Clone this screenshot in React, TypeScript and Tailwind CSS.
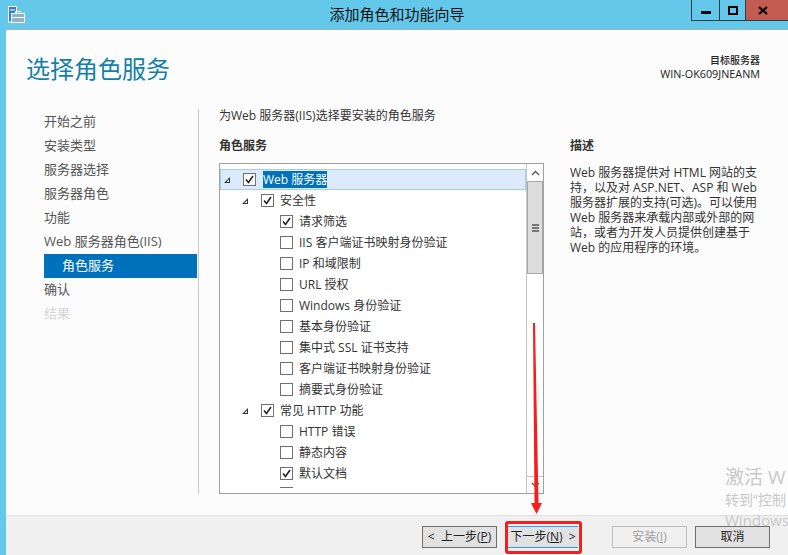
const FONT = "[font-family:'Open_Sans','Noto_Sans_CJK_SC',sans-serif]"

const navItems = [
  { label: '开始之前' },
  { label: '安装类型' },
  { label: '服务器选择' },
  { label: '服务器角色' },
  { label: '功能' },
  { label: 'Web 服务器角色(IIS)' },
  { label: '角色服务', active: true },
  { label: '确认' },
  { label: '结果', disabled: true },
]

type Row = { label: string; level: number; checked?: boolean; expander?: boolean; selected?: boolean }

const rows: Row[] = [
  { label: 'Web 服务器', level: 0, checked: true, expander: true, selected: true },
  { label: '安全性', level: 1, checked: true, expander: true },
  { label: '请求筛选', level: 2, checked: true },
  { label: 'IIS 客户端证书映射身份验证', level: 2 },
  { label: 'IP 和域限制', level: 2 },
  { label: 'URL 授权', level: 2 },
  { label: 'Windows 身份验证', level: 2 },
  { label: '基本身份验证', level: 2 },
  { label: '集中式 SSL 证书支持', level: 2 },
  { label: '客户端证书映射身份验证', level: 2 },
  { label: '摘要式身份验证', level: 2 },
  { label: '常见 HTTP 功能', level: 1, checked: true, expander: true },
  { label: 'HTTP 错误', level: 2 },
  { label: '静态内容', level: 2 },
  { label: '默认文档', level: 2, checked: true },
]

function Checkbox({ checked }: { checked?: boolean }) {
  return (
    <span className="flex size-[13px] shrink-0 items-center justify-center border border-[#707070] bg-white">
      {checked && (
        <svg width="11" height="11" viewBox="0 0 11 11" fill="none">
          <path d="M2 5.5 L4.5 8.5 L9 2" stroke="#222" strokeWidth="1.6" />
        </svg>
      )}
    </span>
  )
}

function TreeRow({ row }: { row: Row }) {
  const indent = row.level === 0 ? 'pl-[2px]' : row.level === 1 ? 'pl-[21px]' : 'pl-[60px]'
  return (
    <div className={`flex h-[21px] items-center ${indent} ${row.selected ? 'border border-[#a9cdf2] bg-[#dcebfc]' : ''}`}>
      {row.expander && (
        <svg className="mr-[12px] shrink-0" width="8" height="8" viewBox="0 0 8 8">
          <path d="M7 1 V7 H1 Z" fill="#333" />
          <path d="M6 3.5 V6 H3.5 Z" fill="#fff" />
        </svg>
      )}
      <Checkbox checked={row.checked} />
      <span className={`text-[12px] leading-[17px] ${row.selected ? 'ml-[7px] bg-[#0072bc] text-white' : 'ml-[6px] text-[#333]'}`}>
        {row.label}
      </span>
    </div>
  )
}

function Scrollbar() {
  return (
    <div className="flex w-[17px] shrink-0 flex-col border-l border-[#c4c4c4] bg-white">
      <div className="flex h-[17px] items-center justify-center">
        <svg width="9" height="6" viewBox="0 0 9 6" fill="none">
          <path d="M1 5 L4.5 1.5 L8 5" stroke="#555" strokeWidth="1.3" />
        </svg>
      </div>
      <div className="flex h-[93px] items-center justify-center border border-[#a8a8a8] bg-[#dcdcdc]">
        <div className="flex flex-col gap-[1px]">
          <div className="h-[2px] w-[7px] bg-[#777]" />
          <div className="h-[2px] w-[7px] bg-[#777]" />
          <div className="h-[2px] w-[7px] bg-[#777]" />
        </div>
      </div>
      <div className="flex-1" />
      <div className="flex h-[17px] items-center justify-center border-t border-[#c4c4c4]">
        <svg width="9" height="6" viewBox="0 0 9 6" fill="none">
          <path d="M1 1 L4.5 4.5 L8 1" stroke="#555" strokeWidth="1.3" />
        </svg>
      </div>
    </div>
  )
}

function FooterButton({ children, tone = 'normal' }: { children: React.ReactNode; tone?: 'normal' | 'focus' | 'disabled' }) {
  const toneClass =
    tone === 'focus'
      ? 'w-[70px] border-y border-[#3399ff] bg-[#e1e1e1] text-[#222]'
      : tone === 'disabled'
        ? 'w-[75px] border border-[#bfbfbf] bg-[#f0f0f0] text-[#a0a0a0]'
        : 'w-[75px] border border-[#707070] bg-[#e1e1e1] text-[#222]'
  return <div className={`flex h-[22px] items-center justify-center whitespace-pre text-[12px] ${toneClass}`}>{children}</div>
}

export default function App() {
  return (
    <div className={`relative flex h-[555px] w-[788px] flex-col overflow-hidden bg-[#63c8ea] ${FONT}`}>
      {/* title bar */}
      <div className="relative flex h-[29px] shrink-0 items-center">
        <svg className="ml-[8px] mt-[-1px]" width="17" height="17" viewBox="0 0 17 17">
          <rect x="0.5" y="0.5" width="8" height="15.5" fill="#2f7fd6" stroke="#fff" />
          <rect x="2" y="3.5" width="5" height="1" fill="#fff" />
          <rect x="3.5" y="7.5" width="13" height="9" fill="#8fb2c6" stroke="#fff" />
          <path d="M7.5 7.5 V5.5 H12.5 V7.5" fill="none" stroke="#fff" />
          <rect x="4" y="11" width="12" height="1" fill="#fff" />
        </svg>
        <div className="absolute inset-x-0 top-[4px] pl-[6px] text-center text-[15px] leading-[20px] text-[#111]">添加角色和功能向导</div>
        <div className="absolute right-0 top-0 flex h-[21px] border-b border-l border-[#2f3c44]">
          <div className="flex w-[28px] items-center justify-center border-r border-[#2f3c44]">
            <div className="mt-[4px] h-[3px] w-[10px] bg-black" />
          </div>
          <div className="flex w-[26px] items-center justify-center border-r border-[#2f3c44]">
            <div className="h-[9px] w-[10px] border-2 border-black" />
          </div>
          <div className="flex w-[42px] items-center justify-center bg-[#c25b50] pr-[8px]">
            <svg width="10" height="9" viewBox="0 0 10 9" fill="none">
              <path d="M1 1 L9 8 M9 1 L1 8" stroke="#000" strokeWidth="2.2" />
            </svg>
          </div>
        </div>
      </div>

      {/* dialog body */}
      <div className="ml-[6px] flex min-h-0 flex-1 flex-col border-t border-[#9fb3bd] bg-[#fcfcfc]">
        <div className="flex h-[79px] shrink-0 items-start justify-between pr-[28px]">
          <h1 className="ml-[20px] mt-[20px] text-[24px] font-normal leading-[38px] text-[#1280a8]">选择角色服务</h1>
          <div className="mt-[24px] text-right leading-[13px] text-[#222]">
            <div className="text-[10px] font-medium">目标服务器</div>
            <div className="text-[10.8px]">WIN-OK609JNEANM</div>
          </div>
        </div>

        <div className="flex min-h-0 flex-1">
          {/* wizard steps */}
          <nav className="ml-[38px] w-[153px] shrink-0 pt-[1px]">
            {navItems.map((item) => (
              <div
                key={item.label}
                className={`flex h-[24px] items-center text-[13px] ${
                  item.active
                    ? 'bg-[#0072bc] pl-[18px] text-white'
                    : item.disabled
                      ? 'text-[#d4d4d4]'
                      : 'text-[#555]'
                }`}
              >
                {item.label}
              </div>
            ))}
          </nav>
          <div className="ml-[1px] mb-[21px] w-px bg-[#c8c8c8]" />

          <div className="ml-[20px] flex w-[325px] shrink-0 flex-col">
            <p className="text-[12px] leading-[14px] text-[#333]">为Web 服务器(IIS)选择要安装的角色服务</p>
            <h2 className="mt-[16px] text-[12px] font-bold leading-[14px] text-[#333]">角色服务</h2>
            <div className="mt-[10px] flex h-[331px] border border-[#a0a0a0] bg-white">
              <div className="min-w-0 flex-1 overflow-hidden pt-[5px]">
                {rows.map((row) => (
                  <TreeRow key={row.label} row={row} />
                ))}
                <div className="ml-[60px] mt-[3px] h-px w-[13px] bg-[#707070]" />
              </div>
              <Scrollbar />
            </div>
          </div>

          <div className="ml-[26px] w-[195px] shrink-0">
            <h2 className="mt-[30px] text-[12px] font-bold leading-[14px] text-[#333]">描述</h2>
            <p className="mt-[12px] text-[12px] leading-[15px] text-[#333]">
              Web 服务器提供对 HTML 网站的支持，以及对 ASP.NET、ASP 和 Web 服务器扩展的支持(可选)。可以使用 Web 服务器来承载内部或外部的网站，或者为开发人员提供创建基于 Web 的应用程序的环境。
            </p>
          </div>
        </div>

        {/* footer */}
        <div className="flex h-[40px] shrink-0 items-start border-t border-[#dfdfdf] bg-[#f0f0f0] pl-[416px] pt-[10px]">
          <FooterButton>{'<  上一步('}<u>P</u>)</FooterButton>
          <div className="ml-[11px]">
            <FooterButton tone="focus">下一步(<u>N</u>{')  >'}</FooterButton>
          </div>
          <div className="ml-[34px]">
            <FooterButton tone="disabled">安装(<u>I</u>)</FooterButton>
          </div>
          <div className="ml-[8px]">
            <FooterButton>取消</FooterButton>
          </div>
        </div>
      </div>

      {/* activation watermark, cut off by the window edge in the original */}
      <div className="pointer-events-none absolute left-[725px] top-[465px] whitespace-nowrap text-[#c8c8c8]">
        <div className="text-[19px] leading-[24px]">激活 W</div>
        <div className="mt-[1px] text-[14px] leading-[20px]">转到“控制</div>
        <div className="text-[15px] leading-[21px]">Windows</div>
      </div>

      {/* screenshot annotation */}
      <svg className="pointer-events-none absolute left-[525px] top-[320px]" width="20" height="195" viewBox="0 0 20 195">
        <path d="M8 3 L10 3 L13.5 183 H17 L11.5 194 L6 183 H9.5 Z" fill="#f81c1c" />
      </svg>
      <div className="pointer-events-none absolute left-[505px] top-[521px] h-[33px] w-[77px] rounded-[3px] border-[3px] border-[#f02020]" />
    </div>
  )
}
